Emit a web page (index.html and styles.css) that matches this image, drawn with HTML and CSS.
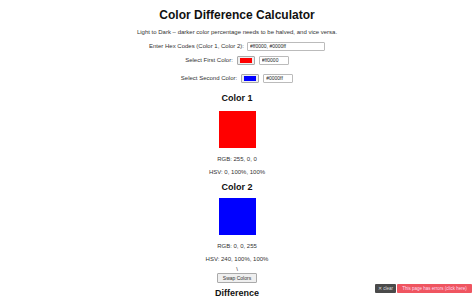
FILE: index.html
```html
<!DOCTYPE html>
<html lang="en">
<head>
    <meta charset="UTF-8" />
    <title>Color Difference Calculator</title>
    <link rel="stylesheet" href="styles.css">
</head>
<body>

<div class="page">
    <h1 class="title">Color Difference Calculator</h1>
    <p class="intro">Light to Dark &ndash; darker color percentage needs to be halved, and vice versa.</p>

    <div class="row row-hex">
        <label for="hexInput">Enter Hex Codes (Color 1, Color 2):</label>
        <input id="hexInput" class="text-input hex-input" type="text" value="#ff0000, #0000ff">
    </div>

    <div class="row row-first">
        <label>Select First Color:</label>
        <span class="swatch"><span class="swatch-fill red"></span></span>
        <input class="text-input small-input" type="text" value="#ff0000">
    </div>

    <div class="row row-second">
        <label>Select Second Color:</label>
        <span class="swatch"><span class="swatch-fill blue"></span></span>
        <input class="text-input small-input" type="text" value="#0000ff">
    </div>

    <h2 class="section-title first-title">Color 1</h2>
    <div class="color-box red"></div>
    <p class="info rgb">RGB: 255, 0, 0</p>
    <p class="info hsv">HSV: 0, 100%, 100%</p>

    <h2 class="section-title second-title">Color 2</h2>
    <div class="color-box blue second-box"></div>
    <p class="info rgb">RGB: 0, 0, 255</p>
    <p class="info hsv">HSV: 240, 100%, 100%</p>

    <p class="info slash">\</p>
    <button class="swap-btn" type="button">Swap Colors</button>

    <h2 class="section-title diff-title">Difference</h2>
</div>

<!-- error overlay from the dev server -->
<div class="error-bar">
    <span class="clear-btn">&#10005; clear</span>
    <span class="error-badge">This page has errors (click here)</span>
</div>

</body>
</html>
```

FILE: styles.css
```css
body {
    margin: 0;
    font-family: "Liberation Sans", Arial, sans-serif;
    font-size: 6px;
    color: #333;
    background: #fff;
}

.page {
    display: flex;
    flex-direction: column;
    align-items: center;
    padding-top: 8px;
}

.page > * {
    flex-shrink: 0;
}

.title {
    margin: 0;
    font-size: 12px;
    line-height: 14px;
    color: #111;
}

.intro {
    margin: 6px 0 0;
    line-height: 8px;
}

.row {
    display: flex;
    align-items: center;
    gap: 4px;
    height: 10px;
}

.row-hex { margin-top: 5px; gap: 3px; }
.row-first { margin-top: 4px; }
.row-second { margin-top: 8px; }

.text-input {
    font-family: "Liberation Sans", Arial, sans-serif;
    font-size: 5px;
    height: 9px;
    padding: 0 2px;
    border: 1px solid #bbb;
    border-radius: 1px;
    box-sizing: border-box;
    color: #222;
}

.hex-input { width: 78px; }
.small-input { width: 30px; }

/* colour picker look-alike */
.swatch {
    display: inline-flex;
    width: 18px;
    height: 9px;
    padding: 1px 2px;
    border: 1px solid #aaa;
    border-radius: 1px;
    background: #efefef;
    box-sizing: border-box;
}

.swatch-fill {
    flex: 1;
}

.red { background: #ff0000; }
.blue { background: #0000ff; }

.section-title {
    margin: 7px 0 0;
    font-size: 9px;
    line-height: 11px;
    color: #111;
}

.first-title { margin-top: 10px; }
.second-title { margin-top: 6px; }

.color-box {
    width: 37px;
    height: 37px;
    margin-top: 7px;
}

.second-box { margin-top: 5px; }

.info {
    margin: 0;
    line-height: 8px;
}

.rgb { margin-top: 7px; }
.hsv { margin-top: 5px; }
.slash { margin-top: 2px; }

.swap-btn {
    margin-top: 0;
    height: 10px;
    width: 40px;
    padding: 0;
    font-family: "Liberation Sans", Arial, sans-serif;
    font-size: 5px;
    color: #333;
    background: #efefef;
    border: 1px solid #aaa;
    border-radius: 1px;
}

.diff-title { margin-top: 5px; }

.error-bar {
    position: fixed;
    right: 2px;
    bottom: 3px;
    display: flex;
    gap: 1px;
    font-size: 4.5px;
    line-height: 9px;
}

.clear-btn {
    width: 21px;
    text-align: center;
    background: #4a4a4a;
    color: #ddd;
    border-radius: 1px;
}

.error-badge {
    width: 75px;
    text-align: center;
    background: #ef5560;
    color: #fde;
    border-radius: 1px;
}
```
